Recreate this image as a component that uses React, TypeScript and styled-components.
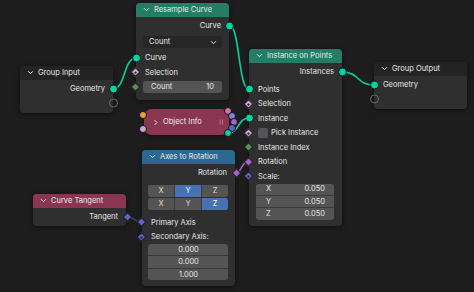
import styled, { createGlobalStyle, css } from 'styled-components'

const GlobalStyle = createGlobalStyle`
  html, body { margin: 0; padding: 0; background: #1d1d1d; }
  body { font-family: Inter, "DejaVu Sans", sans-serif; }
`

const COLORS = {
  geometry: '#00d6a3',
  bool: '#cca6d6',
  int: '#598c5c',
  rotation: '#a663c7',
  vector: '#6363c7',
  object: '#ed9e40',
  matrix: '#d66fae',
  hollow: '#6a6a6a',
}

const HEADERS = {
  geometry: '#237e65',
  input: '#8a3652',
  converter: '#2b6890',
  group: '#232323',
}

type SocketKind = 'circle' | 'diamond' | 'field' | 'hollow'

const Canvas = styled.div`
  position: relative;
  width: 474px;
  height: 292px;
  overflow: hidden;
  background: #1d1d1d;
  color: #e6e6e6;
  font-size: 7.5px;
  line-height: 1;
`

const Links = styled.svg`
  position: absolute;
  inset: 0;
  width: 474px;
  height: 292px;
  z-index: 0;
  pointer-events: none;
`

const LinksTop = styled(Links)`
  z-index: 3;
`

const Node = styled.div<{ $x: number; $y: number; $w?: number; $pb?: number }>`
  position: absolute;
  left: ${p => p.$x}px;
  top: ${p => p.$y}px;
  width: ${p => p.$w ?? 93}px;
  padding-bottom: ${p => p.$pb ?? 6}px;
  background: #2f2f2f;
  border-radius: 4px;
  box-shadow: 0 1px 5px rgba(0, 0, 0, 0.55);
  z-index: 1;
`

const Header = styled.div<{ $color: string }>`
  height: 13.5px;
  display: flex;
  align-items: center;
  gap: 4px;
  padding-left: 7px;
  background: ${p => p.$color};
  border-radius: 4px 4px 0 0;
  color: #e8e8e8;
  margin-bottom: 2px;
`

const Row = styled.div<{ $out?: boolean }>`
  position: relative;
  height: 14.5px;
  display: flex;
  align-items: center;
  justify-content: ${p => (p.$out ? 'flex-end' : 'flex-start')};
  padding: 0 8px 0 9px;
  white-space: nowrap;
`

const Spacer = styled.div<{ $h: number }>`
  height: ${p => p.$h}px;
`

const socketShape = {
  circle: css`
    width: 7px;
    height: 7px;
    border-radius: 50%;
  `,
  diamond: css`
    width: 5px;
    height: 5px;
    transform: translateY(-50%) rotate(45deg);
  `,
  field: css`
    width: 5px;
    height: 5px;
    transform: translateY(-50%) rotate(45deg);
    &::after {
      content: '';
      position: absolute;
      left: 1.5px;
      top: 1.5px;
      width: 2px;
      height: 2px;
      background: #2a2a2a;
    }
  `,
  hollow: css`
    width: 7px;
    height: 7px;
    border-radius: 50%;
    background: transparent !important;
    border-color: ${COLORS.hollow} !important;
  `,
}

const Socket = styled.span<{ $kind: SocketKind; $color: string; $side: 'left' | 'right' }>`
  position: absolute;
  top: 50%;
  ${p => (p.$side === 'left' ? 'left: -4.5px;' : 'right: -4.5px;')}
  transform: translateY(-50%);
  box-sizing: content-box;
  background: ${p => p.$color};
  border: 1px solid #141414;
  z-index: 4;
  ${p => socketShape[p.$kind]}
`

const Dropdown = styled.div`
  height: 12px;
  margin: 0 7px;
  padding: 0 5px 0 6px;
  display: flex;
  align-items: center;
  justify-content: space-between;
  background: #262626;
  border-radius: 3px;
`

const Field = styled.div<{ $center?: boolean }>`
  flex: 1;
  height: 12px;
  margin: 0 -1px 0 -2px;
  padding: 0 8px;
  display: flex;
  align-items: center;
  justify-content: ${p => (p.$center ? 'center' : 'space-between')};
  background: #545454;
  border-radius: 3px;
`

const Stack = styled.div<{ $l: number; $r: number }>`
  margin: 0 ${p => p.$r}px 0 ${p => p.$l}px;
  display: flex;
  flex-direction: column;
  gap: 1px;
  border-radius: 3px;
  overflow: hidden;
  background: #3a3a3a;
`

const StackRow = styled.div<{ $center?: boolean }>`
  height: 11.4px;
  display: flex;
  align-items: center;
  justify-content: ${p => (p.$center ? 'center' : 'space-between')};
  padding: 0 9px 0 10px;
  background: #545454;
`

const Toggle = styled.div`
  margin: 0 7px 0 6px;
  height: 12px;
  display: grid;
  grid-template-columns: repeat(3, 1fr);
  gap: 1px;
  border-radius: 3px;
  overflow: hidden;
  background: #3a3a3a;
`

const ToggleCell = styled.div<{ $on?: boolean }>`
  display: flex;
  align-items: center;
  justify-content: center;
  background: ${p => (p.$on ? '#4772b3' : '#545454')};
  color: ${p => (p.$on ? '#ffffff' : '#dcdcdc')};
`

const Check = styled.span`
  width: 10px;
  height: 10px;
  margin-right: 3px;
  border-radius: 2px;
  background: #545454;
`

const Collapsed = styled.div<{ $x: number; $y: number }>`
  position: absolute;
  left: ${p => p.$x}px;
  top: ${p => p.$y}px;
  width: 85px;
  height: 26px;
  display: flex;
  align-items: center;
  gap: 4px;
  padding-left: 8px;
  box-sizing: border-box;
  background: #8a3652;
  border-radius: 8px;
  box-shadow: 0 1px 5px rgba(0, 0, 0, 0.55);
  color: #ececec;
  z-index: 1;
`

const Pin = styled.span<{ $x: number; $y: number; $color: string }>`
  position: absolute;
  left: ${p => p.$x - 4}px;
  top: ${p => p.$y - 4}px;
  width: 6px;
  height: 6px;
  border-radius: 50%;
  background: ${p => p.$color};
  border: 1px solid #141414;
  z-index: 4;
`

const Grip = styled.svg`
  position: absolute;
  right: 5px;
  top: 10px;
`

function Chevron({ right }: { right?: boolean }) {
  return (
    <svg width="7" height="7" viewBox="0 0 7 7">
      <polyline
        points={right ? '2.5,1 5,3.5 2.5,6' : '1,2.2 3.5,4.7 6,2.2'}
        fill="none"
        stroke="#dcdcdc"
        strokeWidth="1"
      />
    </svg>
  )
}

function In({ label, kind = 'circle', color, children }: { label?: string; kind?: SocketKind; color: string; children?: React.ReactNode }) {
  return (
    <Row>
      <Socket $kind={kind} $color={color} $side="left" />
      {children}
      {label}
    </Row>
  )
}

function Out({ label, kind = 'circle', color }: { label?: string; kind?: SocketKind; color: string }) {
  return (
    <Row $out>
      {label}
      <Socket $kind={kind} $color={color} $side="right" />
    </Row>
  )
}

function link(x1: number, y1: number, x2: number, y2: number) {
  const h = Math.max(Math.abs(x2 - x1) * 0.55, 8)
  return `M${x1} ${y1} C${x1 + h} ${y1}, ${x2 - h} ${y2}, ${x2} ${y2}`
}

export default function App() {
  return (
    <Canvas>
      <GlobalStyle />
      <Links viewBox="0 0 474 292">
        <g fill="none" strokeWidth="1.6" strokeLinecap="round">
          <path d={link(113, 89, 136, 58)} stroke={COLORS.geometry} />
          <path d={link(229, 25, 249, 89)} stroke={COLORS.geometry} />
          <path d={link(342, 72, 374, 85)} stroke={COLORS.geometry} />
          <path d={link(125, 216, 142, 222)} stroke="#3a3a52" />
          <path d={link(234, 174, 249, 161)} stroke={COLORS.rotation} />
        </g>
      </Links>
      <LinksTop viewBox="0 0 474 292">
        <path d={link(228, 133, 249, 118)} stroke="#1fc896" strokeWidth="1.6" fill="none" />
      </LinksTop>

      <Node $x={20} $y={66} $pb={2}>
        <Header $color={HEADERS.group}><Chevron />Group Input</Header>
        <Out label="Geometry" color={COLORS.geometry} />
        <Out kind="hollow" color={COLORS.hollow} />
      </Node>

      <Node $x={136} $y={3}>
        <Header $color={HEADERS.geometry}><Chevron />Resample Curve</Header>
        <Out label="Curve" color={COLORS.geometry} />
        <Spacer $h={3} />
        <Dropdown>Count<Chevron /></Dropdown>
        <Spacer $h={2.5} />
        <In label="Curve" color={COLORS.geometry} />
        <In label="Selection" kind="field" color={COLORS.bool} />
        <In kind="diamond" color={COLORS.int}>
          <Field><span>Count</span><span>10</span></Field>
        </In>
      </Node>

      <Node $x={249} $y={49}>
        <Header $color={HEADERS.geometry}><Chevron />Instance on Points</Header>
        <Out label="Instances" color={COLORS.geometry} />
        <Spacer $h={3} />
        <In label="Points" color={COLORS.geometry} />
        <In label="Selection" kind="field" color={COLORS.bool} />
        <In label="Instance" color={COLORS.geometry} />
        <In label="Pick Instance" kind="field" color={COLORS.bool}><Check /></In>
        <In label="Instance Index" kind="diamond" color={COLORS.int} />
        <In label="Rotation" kind="diamond" color={COLORS.rotation} />
        <In label="Scale:" kind="field" color={COLORS.vector} />
        <Stack $l={7} $r={8}>
          <StackRow><span>X</span><span>0.050</span></StackRow>
          <StackRow><span>Y</span><span>0.050</span></StackRow>
          <StackRow><span>Z</span><span>0.050</span></StackRow>
        </Stack>
      </Node>

      <Node $x={374} $y={62} $pb={2}>
        <Header $color={HEADERS.group}><Chevron />Group Output</Header>
        <In label="Geometry" color={COLORS.geometry} />
        <In kind="hollow" color={COLORS.hollow} />
      </Node>

      <Collapsed $x={144} $y={109}>
        <Chevron right />Object Info
        <Grip width="5" height="6" viewBox="0 0 5 6">
          <path d="M1 0.5 V5.5 M3.5 0.5 V5.5" stroke="#c0708c" strokeWidth="1" />
        </Grip>
      </Collapsed>
      <Pin $x={143} $y={115} $color={COLORS.object} />
      <Pin $x={143} $y={129} $color={COLORS.bool} />
      <Pin $x={228} $y={111} $color={COLORS.matrix} />
      <Pin $x={232} $y={116} $color="#8080e0" />
      <Pin $x={234} $y={122} $color={COLORS.rotation} />
      <Pin $x={232} $y={128} $color={COLORS.vector} />
      <Pin $x={228} $y={133} $color={COLORS.geometry} />

      <Node $x={142} $y={150}>
        <Header $color={HEADERS.converter}><Chevron />Axes to Rotation</Header>
        <Out label="Rotation" kind="diamond" color={COLORS.rotation} />
        <Spacer $h={4.5} />
        <Toggle>
          <ToggleCell>X</ToggleCell>
          <ToggleCell $on>Y</ToggleCell>
          <ToggleCell>Z</ToggleCell>
        </Toggle>
        <Spacer $h={1} />
        <Toggle>
          <ToggleCell>X</ToggleCell>
          <ToggleCell>Y</ToggleCell>
          <ToggleCell $on>Z</ToggleCell>
        </Toggle>
        <Spacer $h={5.5} />
        <In label="Primary Axis" kind="diamond" color={COLORS.vector} />
        <In label="Secondary Axis:" kind="field" color={COLORS.vector} />
        <Stack $l={6} $r={7}>
          <StackRow $center>0.000</StackRow>
          <StackRow $center>0.000</StackRow>
          <StackRow $center>1.000</StackRow>
        </Stack>
      </Node>

      <Node $x={33} $y={194} $pb={2}>
        <Header $color={HEADERS.input}><Chevron />Curve Tangent</Header>
        <Out label="Tangent" kind="diamond" color={COLORS.vector} />
      </Node>
    </Canvas>
  )
}
